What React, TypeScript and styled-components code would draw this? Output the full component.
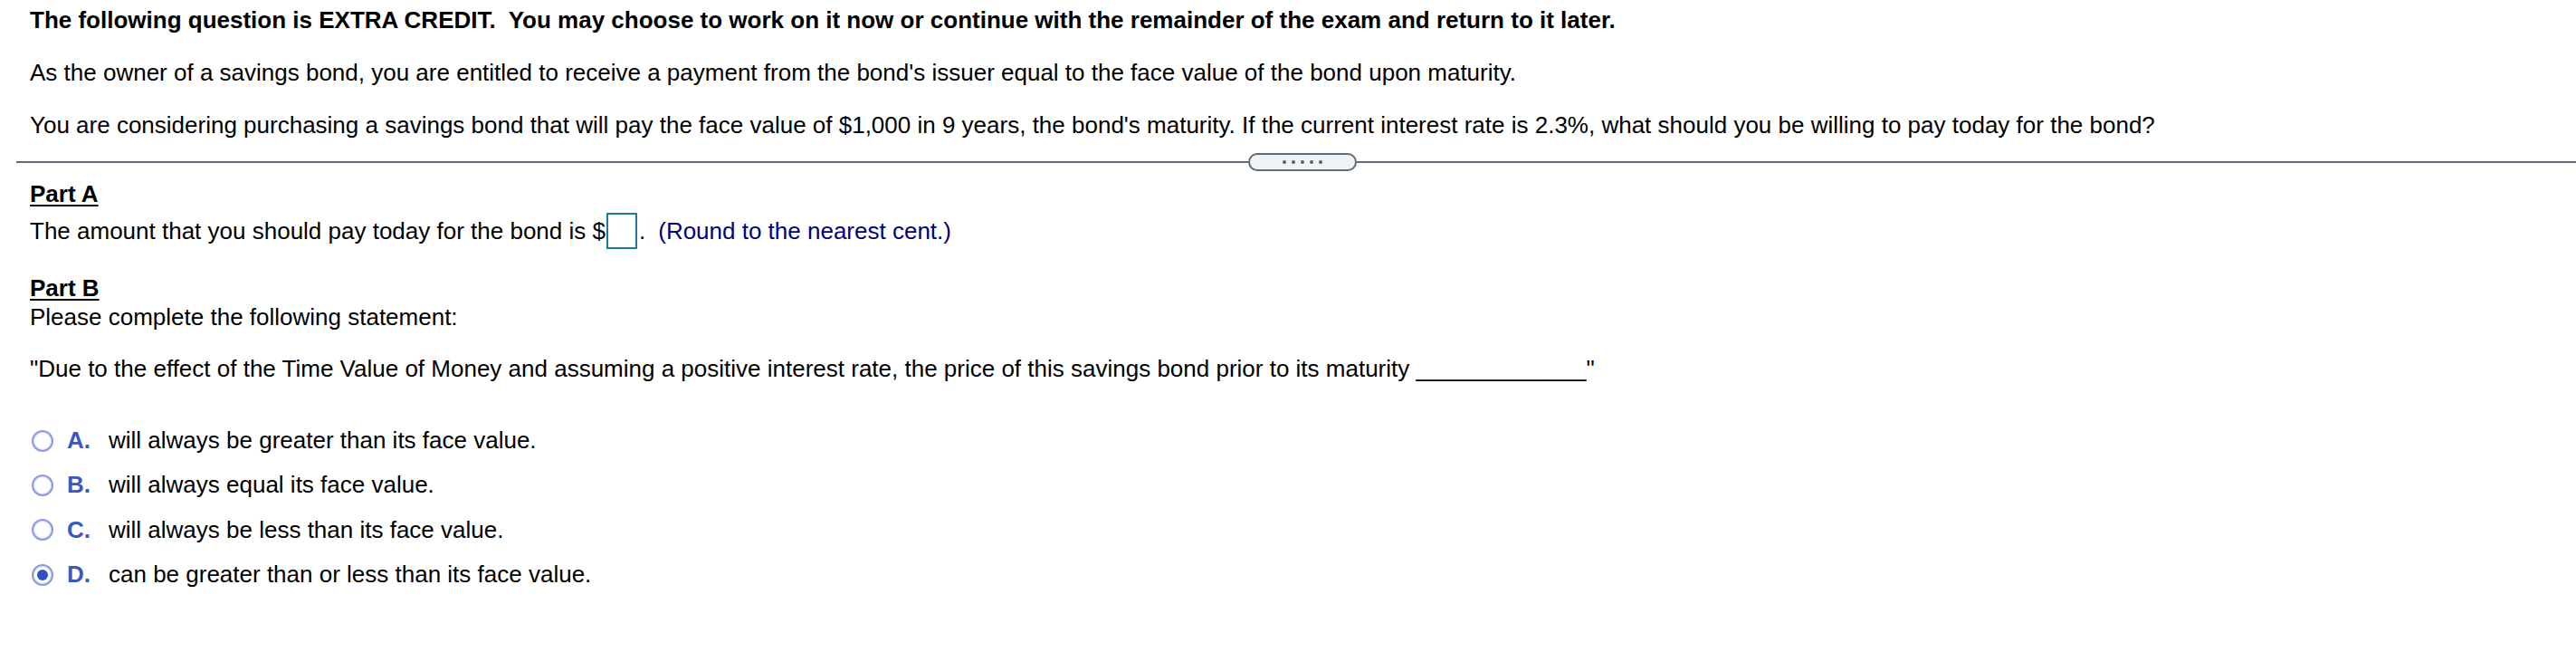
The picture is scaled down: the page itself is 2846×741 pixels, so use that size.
import { useState } from 'react'
import styled, { createGlobalStyle } from 'styled-components'

const GlobalStyle = createGlobalStyle`
  html, body {
    margin: 0;
    padding: 0;
    background: #fff;
  }
`

const Page = styled.div`
  font-family: 'Liberation Sans', Arial, sans-serif;
  font-size: 26px;
  color: #000;
  padding-top: 7px;
  padding-bottom: 40px;
`

const Intro = styled.div`
  padding: 0 33px;
`

const Para = styled.p<{ $bold?: boolean }>`
  margin: 0 0 28px;
  line-height: 30px;
  font-weight: ${(p) => (p.$bold ? 700 : 400)};
  white-space: nowrap;
  &:last-child {
    margin-bottom: 0;
  }
`

const Divider = styled.div`
  display: flex;
  align-items: center;
  margin: 16px 0 0 18px;
  height: 20px;
`

const DividerLine = styled.div<{ $grow: number }>`
  flex: ${(p) => p.$grow};
  height: 2px;
  background: #5f6b78;
`

const Handle = styled.div`
  width: 116px;
  height: 16px;
  border: 2px solid #5f6b78;
  border-radius: 10px;
  background: #f0f3f5;
  display: flex;
  align-items: center;
  justify-content: center;
  gap: 6px;
`

const Dot = styled.span`
  width: 4px;
  height: 4px;
  border-radius: 50%;
  background: #5a5f66;
`

const Section = styled.div`
  padding: 0 33px;
`

const PartTitle = styled.div<{ $top: number }>`
  margin-top: ${(p) => p.$top}px;
  font-weight: 700;
  text-decoration: underline;
  text-underline-offset: 3px;
  line-height: 32px;
`

const Line = styled.div`
  line-height: 32px;
  white-space: nowrap;
`

const AnswerRow = styled.div`
  display: flex;
  align-items: center;
  height: 40px;
  margin-top: 5px;
  white-space: pre;
`

const AnswerBox = styled.input`
  box-sizing: border-box;
  width: 34px;
  height: 40px;
  margin: 0 2px 0 1px;
  border: 2px solid #1f7a99;
  padding: 0;
  background: #fff;
  outline: none;
  font: inherit;
`

const Hint = styled.span`
  color: #000080;
  margin-left: 14px;
`

const Statement = styled.div`
  margin-top: 25px;
  line-height: 32px;
  white-space: nowrap;
`

const Options = styled.div`
  margin-top: 39px;
  display: flex;
  flex-direction: column;
`

const Option = styled.label`
  display: flex;
  align-items: center;
  height: 49.3px;
  padding-left: 35px;
  cursor: pointer;
`

const Radio = styled.span<{ $checked: boolean }>`
  box-sizing: border-box;
  width: 24px;
  height: 24px;
  border-radius: 50%;
  border: 2px solid #8a9be0;
  box-shadow: inset 0 0 0 1px #d3daf4;
  background: #fff;
  display: flex;
  align-items: center;
  justify-content: center;
  &::after {
    content: '';
    width: 12px;
    height: 12px;
    border-radius: 50%;
    background: #2f50c8;
    display: ${(p) => (p.$checked ? 'block' : 'none')};
  }
`

const Letter = styled.span`
  width: 46px;
  margin-left: 15px;
  font-weight: 700;
  color: #3a58c4;
`

const choices = [
  { key: 'A', text: 'will always be greater than its face value.' },
  { key: 'B', text: 'will always equal its face value.' },
  { key: 'C', text: 'will always be less than its face value.' },
  { key: 'D', text: 'can be greater than or less than its face value.' },
]

export default function App() {
  const [picked, setPicked] = useState('D')

  return (
    <Page>
      <GlobalStyle />
      <Intro>
        <Para $bold>
          The following question is EXTRA CREDIT.&nbsp; You may choose to work on it now or continue with the
          remainder of the exam and return to it later.
        </Para>
        <Para>
          As the owner of a savings bond, you are entitled to receive a payment from the bond's issuer equal to the
          face value of the bond upon maturity.
        </Para>
        <Para>
          You are considering purchasing a savings bond that will pay the face value of $1,000 in 9 years, the bond's
          maturity. If the current interest rate is 2.3%, what should you be willing to pay today for the bond?
        </Para>
      </Intro>

      <Divider>
        <DividerLine $grow={1.01} />
        <Handle>
          {[0, 1, 2, 3, 4].map((i) => (
            <Dot key={i} />
          ))}
        </Handle>
        <DividerLine $grow={1} />
      </Divider>

      <Section>
        <PartTitle $top={9}>Part A</PartTitle>
        <AnswerRow>
          The amount that you should pay today for the bond is $<AnswerBox aria-label="answer" />.
          <Hint>(Round to the nearest cent.)</Hint>
        </AnswerRow>

        <PartTitle $top={27}>Part B</PartTitle>
        <Line>Please complete the following statement:</Line>
        <Statement>
          "Due to the effect of the Time Value of Money and assuming a positive interest rate, the price of this savings
          bond prior to its maturity _____________"
        </Statement>
      </Section>

      <Options>
        {choices.map((c) => (
          <Option key={c.key} onClick={() => setPicked(c.key)}>
            <Radio $checked={picked === c.key} />
            <Letter>{c.key}.</Letter>
            {c.text}
          </Option>
        ))}
      </Options>
    </Page>
  )
}
